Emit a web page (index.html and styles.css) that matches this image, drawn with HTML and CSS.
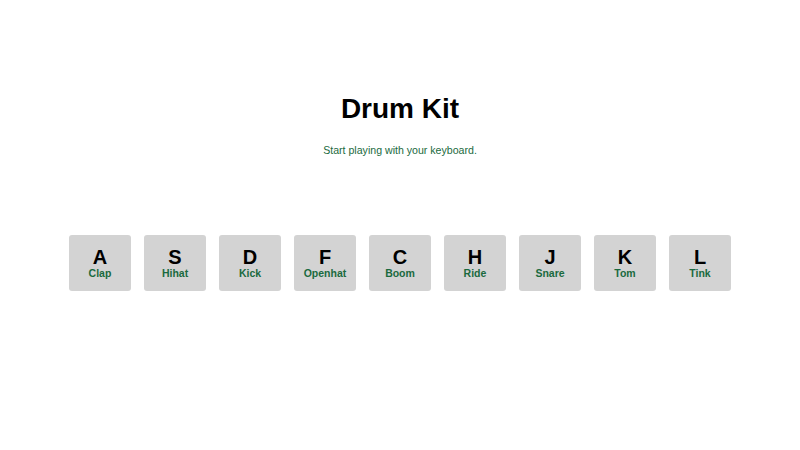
FILE: index.html
```
<!DOCTYPE html>
<html>
<head>
<meta charset="utf-8">
<link rel="stylesheet" href="styles.css">
</head>
<body>
<div class="page">
  <h1 class="title">Drum Kit</h1>
  <p class="subtitle">Start playing with your keyboard.</p>
  <div class="keys">
    <div class="key"><span class="letter">A</span><span class="sound">Clap</span></div>
    <div class="key"><span class="letter">S</span><span class="sound">Hihat</span></div>
    <div class="key"><span class="letter">D</span><span class="sound">Kick</span></div>
    <div class="key"><span class="letter">F</span><span class="sound">Openhat</span></div>
    <div class="key"><span class="letter">C</span><span class="sound">Boom</span></div>
    <div class="key"><span class="letter">H</span><span class="sound">Ride</span></div>
    <div class="key"><span class="letter">J</span><span class="sound">Snare</span></div>
    <div class="key"><span class="letter">K</span><span class="sound">Tom</span></div>
    <div class="key"><span class="letter">L</span><span class="sound">Tink</span></div>
  </div>
</div>
</body>
</html>
```
FILE: styles.css
```
html, body {
  margin: 0;
  padding: 0;
  background: #ffffff;
  font-family: "Liberation Sans", Arial, sans-serif;
}
.page {
  display: flex;
  flex-direction: column;
  align-items: center;
  padding-top: 91px;
}
.title {
  margin: 0;
  font-size: 28px;
  font-weight: bold;
  color: #000;
  line-height: 36px;
}
.subtitle {
  margin: 16px 0 0 0;
  font-size: 10.6px;
  line-height: 14px;
  color: #1a6a3e;
}
.keys {
  display: flex;
  gap: 13px;
  margin-top: 78px;
}
.key {
  width: 62px;
  height: 56px;
  background: #d3d3d3;
  border-radius: 3px;
  display: flex;
  flex-direction: column;
  align-items: center;
  justify-content: center;
  box-sizing: border-box;
  padding-top: 1px;
}
.letter {
  font-size: 20px;
  font-weight: bold;
  line-height: 20px;
  color: #000;
}
.sound {
  font-size: 10.5px;
  font-weight: bold;
  line-height: 13px;
  color: #1a6a3e;
}
```
